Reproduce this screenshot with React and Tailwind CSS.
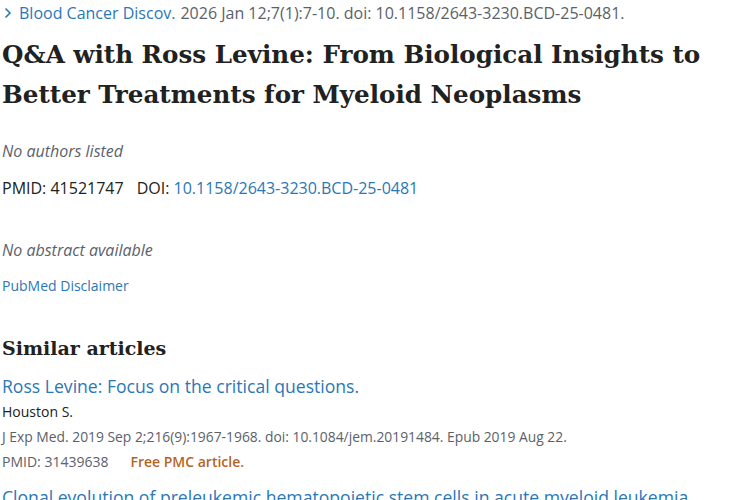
import React from 'react';

const App = () => {
  return (
    <div className="w-[750px] h-[500px] overflow-hidden bg-white pl-[2px] font-['Open_Sans',sans-serif] text-[#212121]">
      {/* Citation line */}
      <div className="flex items-center h-[26px] text-[16px] leading-[26px] whitespace-nowrap">
        <svg width="10" height="12" viewBox="0 0 10 12" className="mr-[6px] ml-[1px]">
          <path d="M2.5 1.5 L7 6 L2.5 10.5" fill="none" stroke="#2a77b8" strokeWidth="1.6" />
        </svg>
        <a className="text-[#2a77b8]">Blood Cancer Discov.</a>
        <span className="text-[#5b616b] ml-[5px]">2026 Jan 12;7(1):7-10. doi: 10.1158/2643-3230.BCD-25-0481.</span>
      </div>

      {/* Title */}
      <h1 className="mt-[9px] font-['DejaVu_Serif',serif] font-bold text-[24.6px] leading-[40px] text-[#212121] whitespace-nowrap">
        Q&amp;A with Ross Levine: From Biological Insights to
        <br />
        Better Treatments for Myeloid Neoplasms
      </h1>

      <p className="mt-[24px] italic text-[16px] leading-[24px] text-[#5b616b]">No authors listed</p>

      <div className="mt-[13px] text-[16px] leading-[24px]">
        <span>PMID: 41521747</span>
        <span className="ml-[13px]">DOI: </span>
        <a className="text-[#2a77b8]">10.1158/2643-3230.BCD-25-0481</a>
      </div>

      <p className="mt-[38px] italic text-[16px] leading-[24px] text-[#5b616b]">No abstract available</p>

      <a className="block mt-[13px] text-[14px] leading-[22px] text-[#2a77b8]">PubMed Disclaimer</a>

      {/* Similar articles */}
      <h2 className="mt-[36px] font-['DejaVu_Serif',serif] font-bold text-[19px] leading-[30px]">Similar articles</h2>

      <a className="block mt-[10px] text-[17.6px] leading-[26px] text-[#2a77b8]">Ross Levine: Focus on the critical questions.</a>
      <p className="text-[14px] leading-[25px]">Houston S.</p>
      <p className="text-[13.85px] leading-[25px] text-[#5b616b] whitespace-nowrap">J Exp Med. 2019 Sep 2;216(9):1967-1968. doi: 10.1084/jem.20191484. Epub 2019 Aug 22.</p>
      <p className="text-[14px] leading-[25px] text-[#5b616b]">
        PMID: 31439638
        <span className="ml-[22px] font-semibold text-[#b3651f]">Free PMC article.</span>
      </p>
      <a className="block mt-[10px] text-[17.6px] leading-[26px] text-[#2a77b8] whitespace-nowrap">Clonal evolution of preleukemic hematopoietic stem cells in acute myeloid leukemia.</a>
    </div>
  );
};

export default App;
